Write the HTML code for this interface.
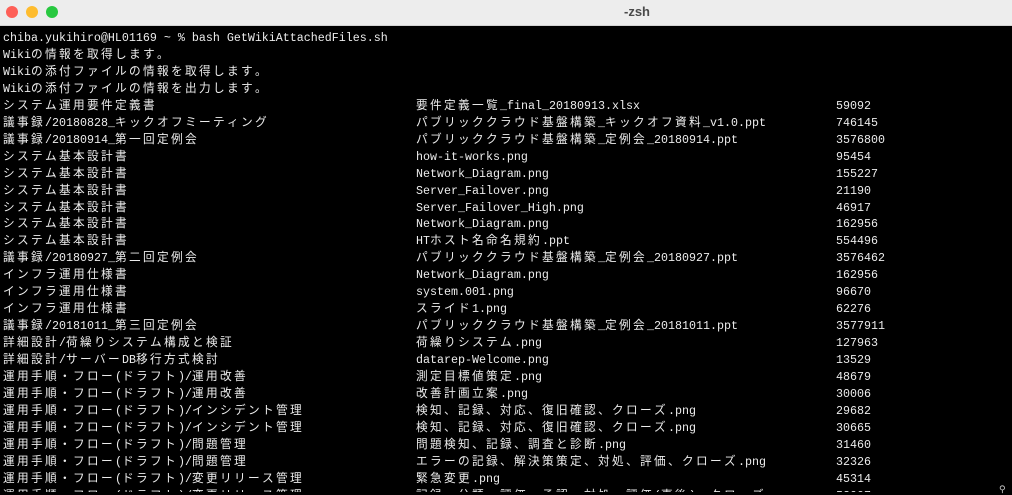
<!DOCTYPE html>
<html><head><meta charset="utf-8"><style>
html,body{margin:0;padding:0;width:1012px;height:492px;overflow:hidden;background:#000}
#tb{position:absolute;left:0;top:0;width:1012px;height:25px;background:#ededed;border-bottom:1px solid #d4d4d4}
.d{position:absolute;top:6px;width:12px;height:12px;border-radius:50%}
#title{position:absolute;left:624px;top:4px;font:bold 13px "Liberation Sans",sans-serif;color:#4a4a4a}
#t{position:absolute;left:3px;top:30px;width:1005px;height:462px;overflow:hidden;font:11.67px/16.96px "Liberation Mono","Noto Sans CJK JP",monospace;color:#ececec;white-space:pre}
.r{position:relative;height:16.96px}
.c{position:absolute;top:0}
.w{display:inline-block;width:14px;text-align:left}
#ic{position:absolute;left:999px;top:485px;font:9px "DejaVu Sans",sans-serif;color:#ccc}
</style></head><body>
<div id="tb"><div class="d" style="left:6px;background:#fe5f57"></div><div class="d" style="left:26px;background:#febc2e"></div><div class="d" style="left:46px;background:#28c840"></div><div id="title">-zsh</div></div>
<div id="t"><div class="r">chiba.yukihiro@HL01169 ~ % bash GetWikiAttachedFiles.sh</div><div class="r">Wikiの情報を取得します。</div><div class="r">Wikiの添付ファイルの情報を取得します。</div><div class="r">Wikiの添付ファイルの情報を出力します。</div></div>
<div id="ic">⚲</div>
<script>
var rows=[
["システム運用要件定義書","要件定義一覧_final_20180913.xlsx","59092"],
["議事録/20180828_キックオフミーティング","パブリッククラウド基盤構築_キックオフ資料_v1.0.ppt","746145"],
["議事録/20180914_第一回定例会","パブリッククラウド基盤構築_定例会_20180914.ppt","3576800"],
["システム基本設計書","how-it-works.png","95454"],
["システム基本設計書","Network_Diagram.png","155227"],
["システム基本設計書","Server_Failover.png","21190"],
["システム基本設計書","Server_Failover_High.png","46917"],
["システム基本設計書","Network_Diagram.png","162956"],
["システム基本設計書","HTホスト名命名規約.ppt","554496"],
["議事録/20180927_第二回定例会","パブリッククラウド基盤構築_定例会_20180927.ppt","3576462"],
["インフラ運用仕様書","Network_Diagram.png","162956"],
["インフラ運用仕様書","system.001.png","96670"],
["インフラ運用仕様書","スライド1.png","62276"],
["議事録/20181011_第三回定例会","パブリッククラウド基盤構築_定例会_20181011.ppt","3577911"],
["詳細設計/荷繰りシステム構成と検証","荷繰りシステム.png","127963"],
["詳細設計/サーバーDB移行方式検討","datarep-Welcome.png","13529"],
["運用手順・フロー(ドラフト)/運用改善","測定目標値策定.png","48679"],
["運用手順・フロー(ドラフト)/運用改善","改善計画立案.png","30006"],
["運用手順・フロー(ドラフト)/インシデント管理","検知、記録、対応、復旧確認、クローズ.png","29682"],
["運用手順・フロー(ドラフト)/インシデント管理","検知、記録、対応、復旧確認、クローズ.png","30665"],
["運用手順・フロー(ドラフト)/問題管理","問題検知、記録、調査と診断.png","31460"],
["運用手順・フロー(ドラフト)/問題管理","エラーの記録、解決策策定、対処、評価、クローズ.png","32326"],
["運用手順・フロー(ドラフト)/変更リリース管理","緊急変更.png","45314"],
["運用手順・フロー(ドラフト)/変更リリース管理","記録、分類、評価、承認、対処、評価(事後)、クローズ.png","53007"]];
var t=document.getElementById('t');
rows.forEach(function(r){var d=document.createElement('div');d.className='r';
[0,413,833].forEach(function(x,i){var s=document.createElement('span');s.className='c';s.style.left=x+'px';s.textContent=r[i];d.appendChild(s);});t.appendChild(d);});
function wrap(n){if(n.nodeType==3){var s=n.nodeValue;if(!/[^\x00-\x7f]/.test(s))return;var f=document.createDocumentFragment();
for(var ch of s){if(ch.charCodeAt(0)>127){var e=document.createElement('span');e.className='w';e.textContent=ch;f.appendChild(e);}else f.appendChild(document.createTextNode(ch));}
n.parentNode.replaceChild(f,n);}else Array.from(n.childNodes).forEach(wrap);}
wrap(t);
</script>
</body></html>
